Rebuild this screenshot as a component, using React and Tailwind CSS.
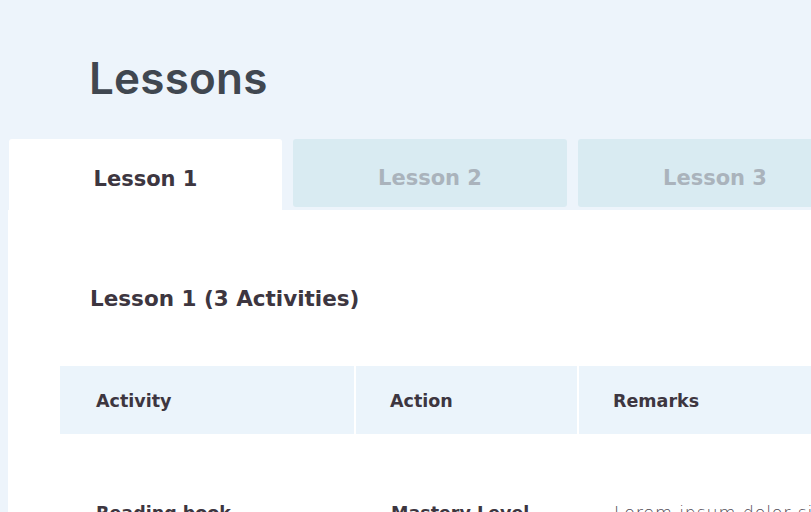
const tabs = ['Lesson 1', 'Lesson 2', 'Lesson 3'];

const rows = [
  { activity: 'Reading book', action: 'Mastery Level', remarks: 'Lorem ipsum dolor sit amet, consectetur adipiscing elit' },
];

const sans = { fontFamily: '"DejaVu Sans", Inter, sans-serif' };

export default function App() {
  return (
    <div className="h-[512px] w-full overflow-hidden bg-[#edf4fb]" style={sans}>
      <div className="pl-[89px] pt-[52px] h-[139px]">
        <h1
          className="text-[44px] leading-[52px] font-semibold text-[#404750] tracking-[0.2px]"
          style={{ fontFamily: 'Inter, sans-serif' }}
        >
          Lessons
        </h1>
      </div>

      <div className="flex gap-[11px] pl-[9px]">
        {tabs.map((tab, i) => (
          <div
            key={tab}
            className={
              i === 0
                ? 'w-[273px] h-[71px] shrink-0 rounded-t-[3px] bg-white flex items-center justify-center pt-[10px] text-[21px] font-bold text-[#3d3640]'
                : 'w-[274px] h-[68px] shrink-0 rounded-[3px] bg-[#d9ebf2] flex items-center justify-center pt-[12px] text-[21px] font-bold text-[#aab3bc]'
            }
          >
            {tab}
          </div>
        ))}
      </div>

      <div className="ml-[8px] bg-white h-[400px] w-[900px]">
        <div className="pl-[82px] pt-[74px] text-[21.5px] font-bold text-[#3d3640] leading-[30px]">
          Lesson 1 (3 Activities)
        </div>

        <div className="ml-[52px] mt-[52px]">
          <div className="flex h-[68px] bg-[#ebf4fb] text-[17.5px] font-bold text-[#3d3640]">
            <div className="w-[296px] shrink-0 flex items-center pl-[36px] pt-[3px] border-r-2 border-white">Activity</div>
            <div className="w-[223px] shrink-0 flex items-center pl-[34px] pt-[3px] border-r-2 border-white">Action</div>
            <div className="flex-1 flex items-center pl-[34px] pt-[3px]">Remarks</div>
          </div>
          {rows.map((r) => (
            <div key={r.activity} className="flex pt-[66px] text-[17.5px] text-[#3d3640] whitespace-nowrap">
              <div className="w-[296px] shrink-0 pl-[36px] font-bold">{r.activity}</div>
              <div className="w-[223px] shrink-0 pl-[35px] font-bold">{r.action}</div>
              <div className="flex-1 pl-[35px] font-light tracking-[0.8px] text-[#4f4a55]">{r.remarks}</div>
            </div>
          ))}
        </div>
      </div>
    </div>
  );
}
